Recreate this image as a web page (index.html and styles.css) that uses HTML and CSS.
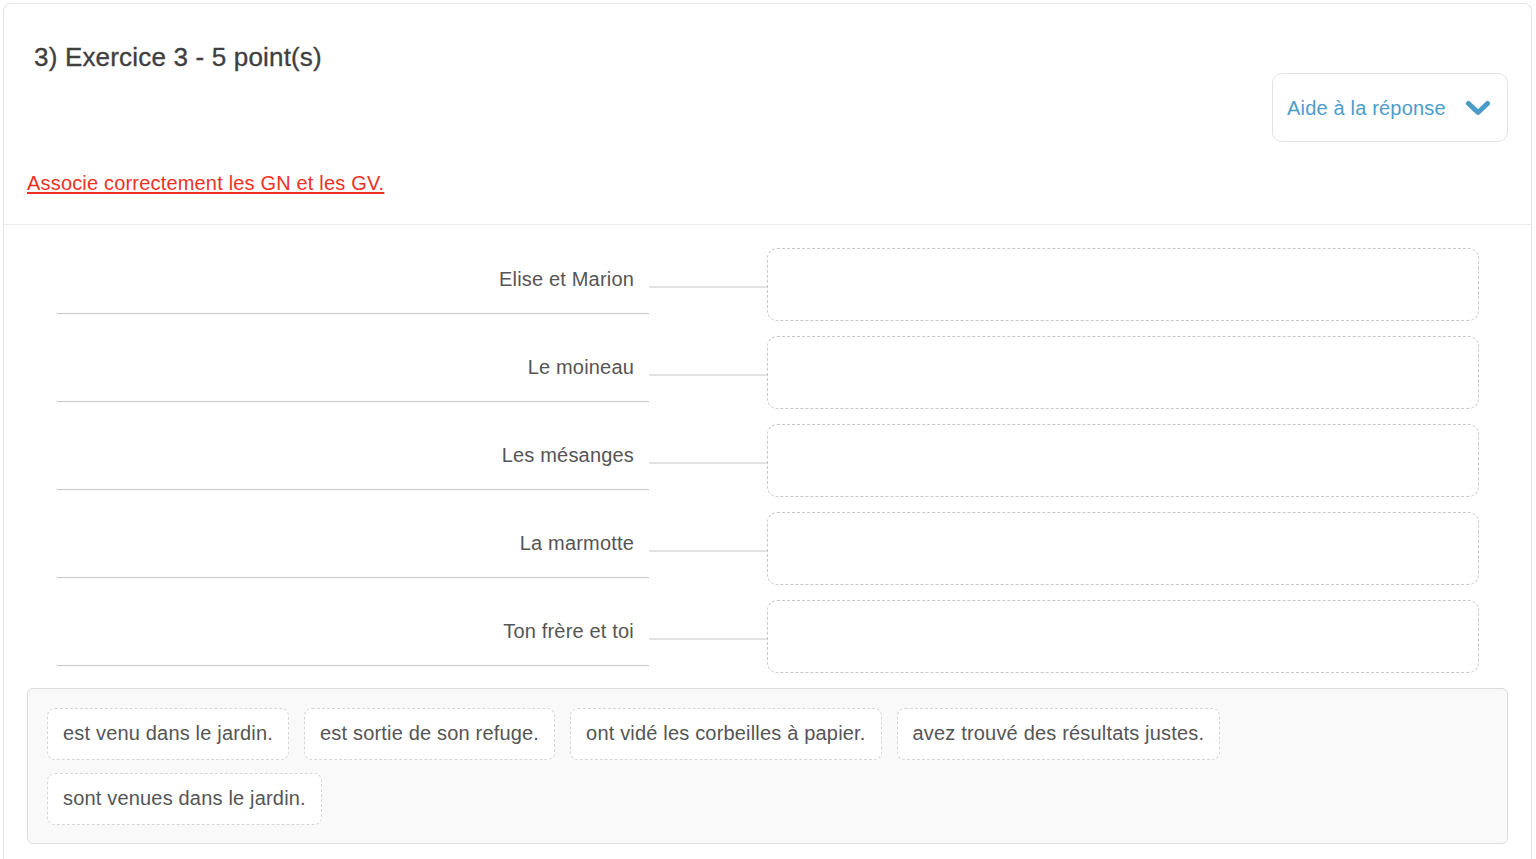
FILE: index.html
```html
<!DOCTYPE html>
<html lang="fr">
<head>
<meta charset="utf-8">
<title>Exercice 3</title>
<link rel="stylesheet" href="styles.css">
</head>
<body>
<div class="card">
  <div class="head">
    <h2 class="title">3) Exercice 3 - 5 point(s)</h2>
    <div class="help-row">
      <button class="help"><span class="help-text">Aide à la réponse</span>
        <svg class="chev" width="26" height="16" viewBox="0 0 26 16"><polyline points="3.5,3.5 13,12.5 22.5,3.5" fill="none" stroke="#4b9bc8" stroke-width="5" stroke-linecap="round" stroke-linejoin="round"/></svg>
      </button>
    </div>
    <a class="instr" href="#">Associe correctement les GN et les GV.</a>
  </div>
  <div class="body">
    <div class="rows">
      <div class="row"><div class="label">Elise et Marion</div><div class="conn"></div><div class="drop"></div></div>
      <div class="row"><div class="label">Le moineau</div><div class="conn"></div><div class="drop"></div></div>
      <div class="row"><div class="label">Les mésanges</div><div class="conn"></div><div class="drop"></div></div>
      <div class="row"><div class="label">La marmotte</div><div class="conn"></div><div class="drop"></div></div>
      <div class="row"><div class="label">Ton frère et toi</div><div class="conn"></div><div class="drop"></div></div>
    </div>
    <div class="bank">
      <div class="chip">est venu dans le jardin.</div>
      <div class="chip">est sortie de son refuge.</div>
      <div class="chip">ont vidé les corbeilles à papier.</div>
      <div class="chip">avez trouvé des résultats justes.</div>
      <div class="chip">sont venues dans le jardin.</div>
    </div>
  </div>
</div>
</body>
</html>
```
FILE: styles.css
```css
html, body {
  margin: 0;
  padding: 0;
  background: #fff;
  font-family: "Liberation Sans", Arial, sans-serif;
  letter-spacing: 0.18px;
}
.card {
  margin: 3px 4px 0 3px;
  border: 1px solid #e6e6e6;
  border-bottom: none;
  border-radius: 8px 8px 0 0;
  min-height: 880px;
}
.head {
  padding: 38px 23px 29px 23px;
  border-bottom: 1px solid #ebebeb;
  display: flex;
  flex-direction: column;
}
.title {
  margin: 0 0 0 7px;
  font-size: 26px;
  line-height: 30px;
  font-weight: normal;
  color: #3f3f3f;
  -webkit-text-stroke: 0.35px #3f3f3f;
}
.help-row {
  display: flex;
  justify-content: flex-end;
  margin-top: 1px;
}
.help {
  display: flex;
  align-items: center;
  justify-content: space-between;
  height: 69px;
  width: 236px;
  padding: 2px 16px 0 14px;
  box-sizing: border-box;
  background: #fff;
  border: 1px solid #e3e3e3;
  border-radius: 10px;
  font-family: inherit;
  font-size: 20px;
  letter-spacing: 0.18px;
  color: #4b9dcc;
  white-space: nowrap;
}
.help-text { white-space: nowrap; }
.chev { display: block; flex: none; margin-top: -2px; }
.instr {
  margin-top: 29px;
  align-self: flex-start;
  font-size: 20px;
  line-height: 24px;
  color: #ee3124;
  text-decoration: underline;
  text-underline-offset: 2px;
}
.body {
  padding: 23px 23px 0 23px;
}
.rows {
  display: flex;
  flex-direction: column;
  gap: 15px;
  padding: 0 29px 0 30px;
}
.row {
  display: flex;
  height: 73px;
}
.label {
  width: 592px;
  height: 66px;
  box-sizing: border-box;
  border-bottom: 1px solid #c4c4c4;
  padding: 19px 15px 0 0;
  text-align: right;
  font-size: 20px;
  line-height: 24px;
  color: #555;
}
.conn {
  width: 118px;
  height: 2px;
  margin-top: 38px;
  background: #e3e3e3;
}
.drop {
  flex: 1;
  height: 73px;
  box-sizing: border-box;
  border: 1px dashed #c8c8c8;
  border-radius: 10px;
}
.bank {
  margin-top: 15px;
  background: #f9f9f9;
  border: 1px solid #dcdcdc;
  border-radius: 6px;
  padding: 19px 19px 18px 19px;
  display: flex;
  flex-wrap: wrap;
  gap: 13px 15px;
}
.chip {
  height: 52px;
  box-sizing: border-box;
  padding: 0 15px 2px 15px;
  display: flex;
  align-items: center;
  background: #fff;
  border: 1px dashed #d6d6d6;
  border-radius: 8px;
  font-size: 20px;
  color: #555;
}
```
